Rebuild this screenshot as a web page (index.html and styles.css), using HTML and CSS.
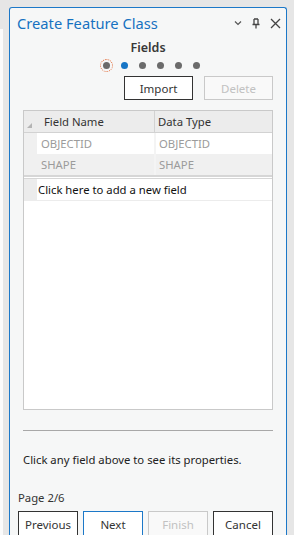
FILE: index.html
```html
<!DOCTYPE html>
<html lang="en">
<head>
    <meta charset="UTF-8">
    <meta name="viewport" content="width=device-width, initial-scale=1.0">
    <title>Create Feature Class</title>
    <link rel="stylesheet" href="styles.css">
</head>
<body>

<div class="shell">
    <div class="side"></div>

    <div class="pane">
        <header class="pane-head">
            <h1>Create Feature Class</h1>
            <div class="pane-tools">
                <svg width="8" height="6" viewBox="0 0 8 6"><path d="M1 1.5 L4 4.5 L7 1.5" fill="none" stroke="#555" stroke-width="1.2"/></svg>
                <svg width="8" height="11" viewBox="0 0 8 11"><path d="M2 1 V6 M6 1 V6 M2 1 H6 M0.5 6.5 H7.5 M4 6.5 V10.5" fill="none" stroke="#444" stroke-width="1.3"/></svg>
                <svg width="11" height="11" viewBox="0 0 11 11"><path d="M1 1 L10 10 M10 1 L1 10" fill="none" stroke="#444" stroke-width="1.3"/></svg>
            </div>
        </header>

        <h2 class="step-title">Fields</h2>

        <div class="steps">
            <span class="dot current"></span>
            <span class="dot active"></span>
            <span class="dot"></span>
            <span class="dot"></span>
            <span class="dot"></span>
            <span class="dot"></span>
        </div>

        <div class="actions">
            <button class="btn">Import</button>
            <button class="btn disabled">Delete</button>
        </div>

        <div class="grid">
            <div class="grid-row grid-head">
                <div class="row-marker"><span class="corner"></span></div>
                <div class="cell">Field Name</div>
                <div class="cell">Data Type</div>
            </div>
            <div class="grid-row locked">
                <div class="row-marker"></div>
                <div class="cell">OBJECTID</div>
                <div class="cell">OBJECTID</div>
            </div>
            <div class="grid-row locked alt">
                <div class="row-marker"></div>
                <div class="cell">SHAPE</div>
                <div class="cell">SHAPE</div>
            </div>
            <div class="grid-row new-row">
                <div class="row-marker"></div>
                <div class="cell wide">Click here to add a new field</div>
            </div>
        </div>

        <hr class="divider">

        <p class="hint">Click any field above to see its properties.</p>

        <p class="page-count">Page 2/6</p>

        <div class="nav-buttons">
            <button class="btn">Previous</button>
            <button class="btn primary">Next</button>
            <button class="btn disabled">Finish</button>
            <button class="btn">Cancel</button>
        </div>
    </div>
</div>

</body>
</html>
```

FILE: styles.css
```css
body {
    margin: 0;
    padding: 0;
    font-family: "Noto Sans", "Open Sans", sans-serif;
    font-size: 11.3px;
    color: #222;
    background-color: #e6e6e6; /* app chrome grey */
    width: 294px;
    height: 535px;
    overflow: hidden;
}
.shell {
    display: flex;
    height: 100%;
    padding-top: 7px;
    box-sizing: border-box;
}
.side {
    width: 3px;
    margin-top: 22px;
    background-color: #fbfbfb;
}
.pane {
    margin-left: 6px;
    width: 276px;
    border: 1px solid #1c78c8;
    border-bottom: none;
    border-radius: 3px 3px 0 0;
    background-color: #f6f7f7;
    display: flex;
    flex-direction: column;
    overflow: hidden;
}
.pane > * {
    flex-shrink: 0; /* content runs past the bottom edge */
}
.pane-head {
    display: flex;
    align-items: center;
    justify-content: space-between;
    height: 30px;
    padding: 0 5px 0 7px;
}
h1 {
    margin: 0;
    font-size: 14.7px;
    font-weight: normal;
    color: #1672c1;
}
.pane-tools {
    display: flex;
    align-items: center;
    gap: 10px;
}
.step-title {
    margin: 1px 0 0;
    font-size: 12.5px;
    font-weight: 600;
    text-align: center;
    color: #383838;
    line-height: 18px;
}
.steps {
    display: flex;
    justify-content: center;
    gap: 11px;
    height: 14px;
    align-items: center;
    margin-top: 1px;
    padding-left: 6px;
}
.dot {
    width: 7px;
    height: 7px;
    border-radius: 50%;
    background-color: #6b6b6b;
}
.dot.current {
    outline: 1px dotted #e0602a;
    outline-offset: 2px;
}
.dot.active {
    background-color: #1675c6;
}
.actions {
    display: flex;
    justify-content: flex-end;
    gap: 11px;
    margin-top: 4px;
    padding-right: 13px;
}
.btn {
    font-family: inherit;
    font-size: 11.5px;
    width: 69px;
    height: 24px;
    padding: 0;
    background-color: #fff;
    color: #333;
    border: 1px solid #333;
}
.btn.disabled {
    color: #c1c1c1;
    border-color: #c9c9c9;
    background-color: #f9f9f9;
}
.btn.primary {
    border-color: #1c78c8;
}
.grid {
    margin: 10px 13px 0 13px;
    height: 300px;
    border: 1px solid #c9c9c9;
    background-color: #fff;
    box-sizing: border-box;
}
.grid-row {
    display: flex;
    height: 21px;
    align-items: stretch;
}
.row-marker {
    width: 13px;
    background-color: #ececec;
    position: relative;
}
.corner {
    position: absolute;
    left: 3px;
    bottom: 4px;
    width: 0;
    height: 0;
    border-left: 5px solid transparent;
    border-bottom: 5px solid #b4b4b4;
}
.cell {
    box-sizing: border-box;
    width: 117px;
    padding-left: 4px;
    display: flex;
    align-items: center;
}
.cell + .cell {
    width: 118px;
    padding-left: 3px;
}
.grid-head {
    background-color: #ececec;
    border-bottom: 1px solid #d2d2d2;
    color: #333;
}
.grid-head .cell {
    padding-left: 7px;
}
.grid-head .cell + .cell {
    border-left: 1px solid #d2d2d2;
    padding-left: 3px;
}
.locked {
    color: #9b9b9b;
    background-color: #fff;
}
.locked .cell + .cell {
    border-left: 2px solid #f4f4f4;
}
.locked.alt {
    background-color: #f0f0f0;
    border-bottom: 2px solid #d6d6d6;
}
.locked .row-marker {
    background-color: #f0f0f0;
}
.new-row {
    margin-top: 1px;
    border-top: 1px solid #d6d6d6;
    border-bottom: 1px solid #ececec;
    color: #111;
}
.new-row .cell.wide {
    width: auto;
    padding-left: 1px;
}
.divider {
    margin: 20px 13px 0 13px;
    border: none;
    border-top: 1px solid #a8a8a8;
}
.hint {
    margin: 21px 0 0 13px;
    line-height: 16px;
    color: #222;
}
.page-count {
    margin: 22px 0 0 8px;
    line-height: 16px;
    color: #333;
}
.nav-buttons {
    display: flex;
    gap: 5px;
    margin: 5px 0 0 8px;
}
.nav-buttons .btn {
    width: 60px;
    height: 26px;
}
```
